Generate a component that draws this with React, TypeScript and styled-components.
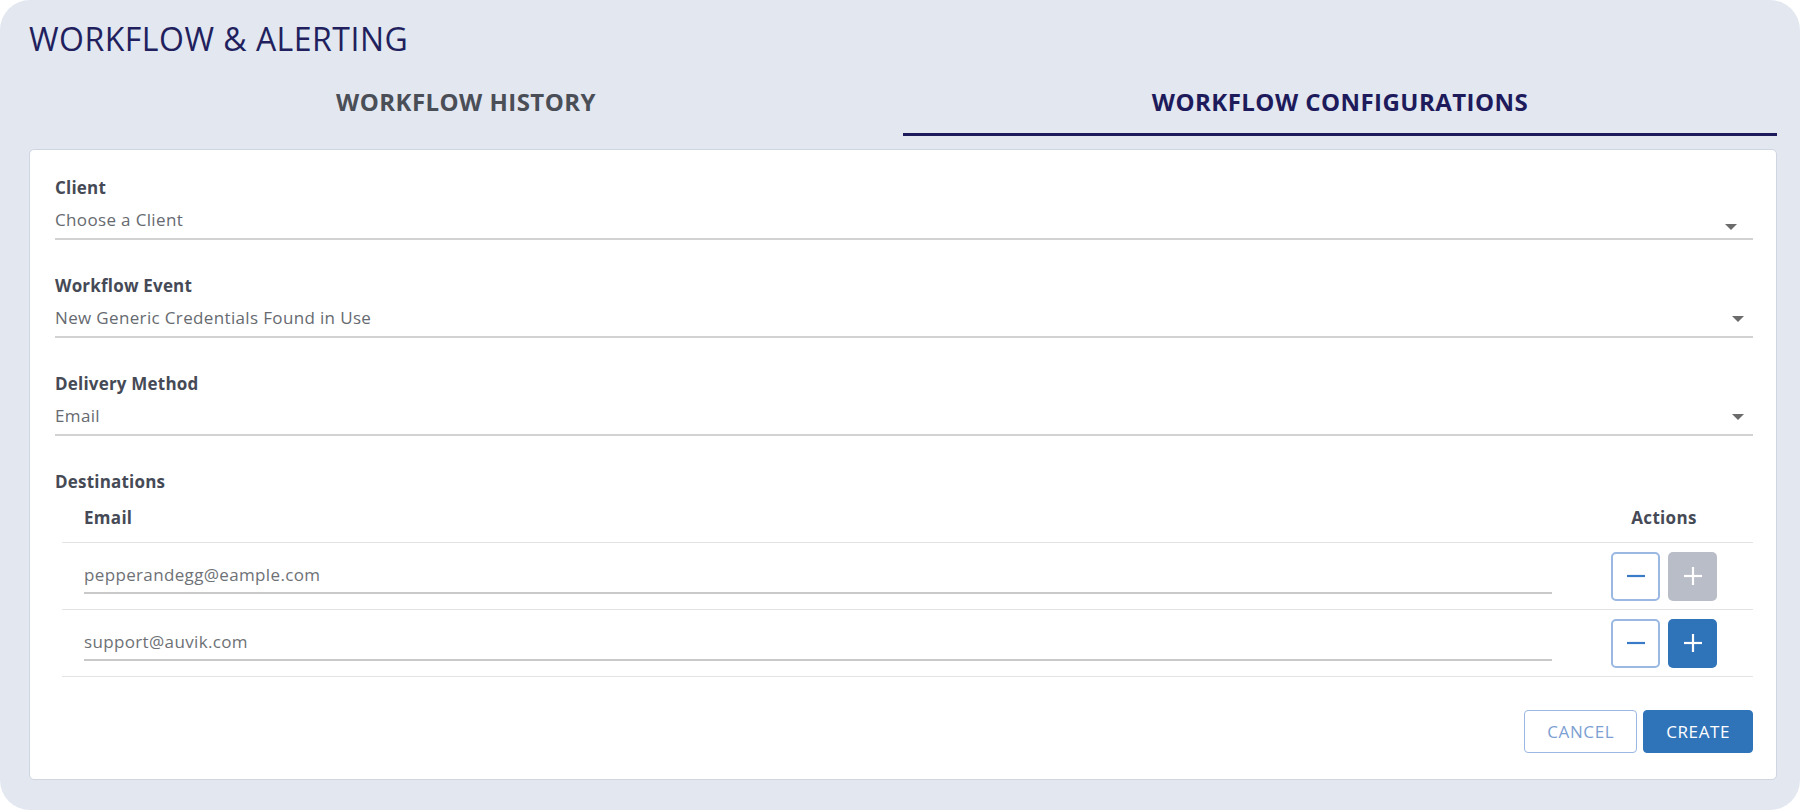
import React from "react";
import styled, { createGlobalStyle } from "styled-components";

const GlobalStyle = createGlobalStyle`
  html, body { margin: 0; padding: 0; background: #ffffff; }
  body { font-family: "Open Sans", "Liberation Sans", sans-serif; }
  * { box-sizing: border-box; }
`;

const Shell = styled.div`
  width: 1800px;
  height: 810px;
  background: #e3e7f0;
  border-radius: 30px;
  padding: 19px 23px 30px 29px;
  display: flex;
  flex-direction: column;
`;

const Title = styled.h1`
  margin: 0;
  font-size: 32px;
  font-weight: 400;
  line-height: 40px;
  letter-spacing: 0.5px;
  color: #221f5e;
`;

const Tabs = styled.div`
  display: grid;
  grid-template-columns: 1fr 1fr;
  margin-top: 11px;
`;

const Tab = styled.div<{ $active?: boolean }>`
  height: 66px;
  display: flex;
  align-items: center;
  justify-content: center;
  font-size: 24px;
  font-weight: 700;
  letter-spacing: 0.45px;
  color: ${(p) => (p.$active ? "#1d1b5b" : "#4a4e57")};
  border-bottom: 3px solid ${(p) => (p.$active ? "#1d1b5b" : "transparent")};
`;

const Card = styled.div`
  margin-top: 13px;
  flex: 1;
  min-height: 0;
  background: #ffffff;
  border: 1px solid #cfd5e1;
  border-radius: 5px;
  padding: 27px 23px 25px 25px;
  display: flex;
  flex-direction: column;
`;

const Field = styled.div`
  margin-bottom: 35px;
`;

const Label = styled.div`
  font-size: 17px;
  font-weight: 700;
  line-height: 22px;
  letter-spacing: 0.2px;
  color: #454a56;
  margin-bottom: 10px;
`;

const Select = styled.div`
  display: flex;
  align-items: center;
  justify-content: space-between;
  line-height: 22px;
  padding-bottom: 7px;
  border-bottom: 2px solid #d2d2d2;
  font-size: 17px;
  letter-spacing: 0.35px;
  color: #666a70;
`;

const Arrow = styled.svg<{ $shifted?: boolean }>`
  width: 12px;
  height: 6px;
  fill: #6b6b6b;
  margin-right: ${(p) => (p.$shifted ? "16px" : "9px")};
  transform: translateY(${(p) => (p.$shifted ? "7px" : "1px")});
`;

const Section = styled.div``;

const SectionLabel = styled(Label)`
  margin-bottom: 0;
`;

const Table = styled.div`
  margin-left: 7px;
`;

const HeaderRow = styled.div`
  display: grid;
  grid-template-columns: 1fr 178px;
  padding: 14px 0 13px;
  border-bottom: 1px solid #e3e3e3;
`;

const HeadCell = styled.div<{ $center?: boolean }>`
  font-size: 17px;
  font-weight: 700;
  line-height: 22px;
  letter-spacing: 0.3px;
  color: #454a56;
  padding-left: ${(p) => (p.$center ? "0" : "22px")};
  text-align: ${(p) => (p.$center ? "center" : "left")};
`;

const Row = styled.div`
  display: grid;
  grid-template-columns: 1fr 178px;
  align-items: center;
  height: 67px;
  border-bottom: 1px solid #e3e3e3;
`;

const EmailInput = styled.div`
  margin: 0 23px 0 22px;
  padding: 6px 0;
  line-height: 22px;
  border-bottom: 2px solid #c9c9c9;
  font-size: 17px;
  letter-spacing: 0.35px;
  color: #6e7176;
`;

const Actions = styled.div`
  display: flex;
  justify-content: center;
  gap: 8px;
`;

const IconButton = styled.div<{ $variant: "outline" | "disabled" | "primary" }>`
  width: 49px;
  height: 49px;
  border-radius: 5px;
  display: flex;
  align-items: center;
  justify-content: center;
  border: ${(p) => (p.$variant === "outline" ? "2px solid #9ab8e2" : "none")};
  background: ${(p) =>
    p.$variant === "outline" ? "#ffffff" : p.$variant === "disabled" ? "#b9bdc8" : "#2f73b9"};
  color: ${(p) => (p.$variant === "outline" ? "#3a7bc8" : "#ffffff")};
`;

const Glyph = styled.svg`
  width: 20px;
  height: 20px;
  stroke: currentColor;
  stroke-width: 2.2;
  fill: none;
`;

const Footer = styled.div`
  display: flex;
  justify-content: flex-end;
  gap: 6px;
  margin-top: 33px;
`;

const TextButton = styled.button<{ $primary?: boolean }>`
  height: 43px;
  padding: 0 22px;
  font-family: "Open Sans", "Liberation Sans", sans-serif;
  font-size: 17px;
  font-weight: 400;
  letter-spacing: 0.6px;
  border-radius: 4px;
  text-transform: uppercase;
  border: ${(p) => (p.$primary ? "1px solid #2f73b9" : "1.5px solid #9ab8e2")};
  background: ${(p) => (p.$primary ? "#2f73b9" : "#ffffff")};
  color: ${(p) => (p.$primary ? "#ffffff" : "#7d9fd2")};
`;

const Caret = ({ shifted }: { shifted?: boolean }) => (
  <Arrow $shifted={shifted} viewBox="0 0 12 6">
    <polygon points="0,0 12,0 6,6" />
  </Arrow>
);

const Minus = () => (
  <Glyph viewBox="0 0 20 20">
    <line x1="1" y1="10" x2="19" y2="10" />
  </Glyph>
);

const Plus = () => (
  <Glyph viewBox="0 0 20 20">
    <line x1="1" y1="10" x2="19" y2="10" />
    <line x1="10" y1="1" x2="10" y2="19" />
  </Glyph>
);

const fields = [
  { label: "Client", value: "Choose a Client", shifted: true },
  { label: "Workflow Event", value: "New Generic Credentials Found in Use" },
  { label: "Delivery Method", value: "Email" },
];

const destinations = [
  { email: "pepperandegg@eample.com", canAdd: false },
  { email: "support@auvik.com", canAdd: true },
];

export default function App() {
  return (
    <>
      <GlobalStyle />
      <Shell>
        <Title>WORKFLOW &amp; ALERTING</Title>
        <Tabs>
          <Tab>WORKFLOW HISTORY</Tab>
          <Tab $active>WORKFLOW CONFIGURATIONS</Tab>
        </Tabs>
        <Card>
          {fields.map((f) => (
            <Field key={f.label}>
              <Label>{f.label}</Label>
              <Select>
                <span>{f.value}</span>
                <Caret shifted={f.shifted} />
              </Select>
            </Field>
          ))}
          <Section>
            <SectionLabel>Destinations</SectionLabel>
            <Table>
              <HeaderRow>
                <HeadCell>Email</HeadCell>
                <HeadCell $center>Actions</HeadCell>
              </HeaderRow>
              {destinations.map((d) => (
                <Row key={d.email}>
                  <EmailInput>{d.email}</EmailInput>
                  <Actions>
                    <IconButton $variant="outline">
                      <Minus />
                    </IconButton>
                    <IconButton $variant={d.canAdd ? "primary" : "disabled"}>
                      <Plus />
                    </IconButton>
                  </Actions>
                </Row>
              ))}
            </Table>
          </Section>
          <Footer>
            <TextButton>Cancel</TextButton>
            <TextButton $primary>Create</TextButton>
          </Footer>
        </Card>
      </Shell>
    </>
  );
}
